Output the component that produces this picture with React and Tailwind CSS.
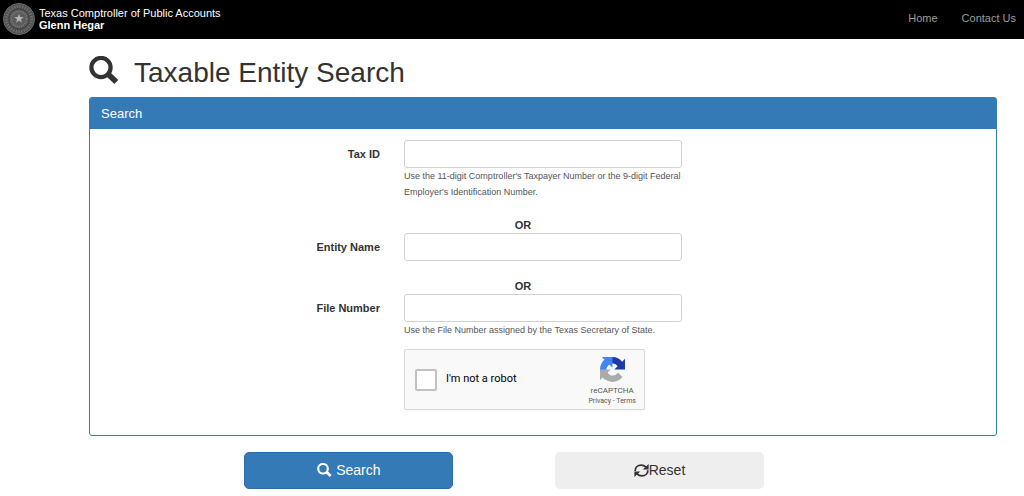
function SearchIcon({ className }) {
  return (
    <svg viewBox="0 0 30 30" className={className} fill="none" stroke="currentColor" aria-hidden="true">
      <circle cx="12" cy="11.5" r="9.6" strokeWidth="4.2" />
      <path d="M18.5 17.5 L27.3 26" strokeWidth="5.6" />
    </svg>
  );
}

function RefreshIcon({ className }) {
  return (
    <svg viewBox="0 0 16 16" className={className} fill="none" stroke="currentColor" aria-hidden="true">
      <path d="M1.2 8.4 C1.2 4.6 4.2 2.2 7.6 2.2 C9.6 2.2 11.4 3 12.8 4.4" strokeWidth="1.9" />
      <path d="M14.8 7.6 C14.8 11.4 11.8 13.8 8.4 13.8 C6.4 13.8 4.6 13 3.2 11.6" strokeWidth="1.9" />
      <path d="M15.6 1 V7 H9.4 Z" fill="currentColor" stroke="none" />
      <path d="M0.4 15 V9 H6.6 Z" fill="currentColor" stroke="none" />
    </svg>
  );
}

function Seal() {
  const star = 'M16 8.5 L17.8 13.6 L23.2 13.7 L18.9 17 L20.5 22.2 L16 19.1 L11.5 22.2 L13.1 17 L8.8 13.7 L14.2 13.6 Z';
  return (
    <svg viewBox="0 0 32 32" className="size-8 shrink-0" role="img" aria-label="Comptroller seal">
      <circle cx="16" cy="16" r="15.5" fill="#4c4c4c" stroke="#6c6c6c" />
      <circle cx="16" cy="16" r="12.6" fill="none" stroke="#707070" strokeWidth="3" strokeDasharray="1.4 1.3" />
      <circle cx="16" cy="16" r="10" fill="#5c5c5c" stroke="#3c3c3c" strokeWidth="0.8" />
      <circle cx="16" cy="16" r="7.6" fill="none" stroke="#7c7c7c" strokeWidth="1.6" strokeDasharray="1 1.2" />
      <path d={star} fill="#b5b5b5" transform="translate(5.6 5.2) scale(0.65)" />
    </svg>
  );
}

function RecaptchaLogo() {
  return (
    <svg viewBox="0 0 64 64" className="size-[25px]" aria-hidden="true">
      <path
        fill="#1c3aa9"
        d="M64 31.955l-.033-1.37V4.687l-7.16 7.16C50.948 4.674 42.033.093 32.05.093c-10.4 0-19.622 4.96-25.458 12.64l11.736 11.86a15.55 15.55 0 0 1 4.754-5.334c2.05-1.6 4.952-2.906 8.968-2.906.485 0 .86.057 1.135.163 4.976.393 9.288 3.14 11.828 7.124l-8.307 8.307L64 31.953"
      />
      <path
        fill="#4285f4"
        d="M31.862.094l-1.37.033H4.594l7.16 7.16C4.58 13.147 0 22.06 0 32.046c0 10.4 4.96 19.622 12.64 25.458L24.5 45.768a15.55 15.55 0 0 1-5.334-4.754c-1.6-2.05-2.906-4.952-2.906-8.968 0-.485.057-.86.163-1.135.393-4.976 3.14-9.288 7.124-11.828l8.307 8.307L31.86.095"
      />
      <path
        fill="#ababab"
        d="M.001 32.045l.033 1.37v25.898l7.16-7.16c5.86 7.173 14.774 11.754 24.76 11.754 10.4 0 19.622-4.96 25.458-12.64l-11.736-11.86a15.55 15.55 0 0 1-4.754 5.334c-2.05 1.6-4.952 2.906-8.968 2.906-.485 0-.86-.057-1.135-.163-4.976-.393-9.288-3.14-11.828-7.124l8.307-8.307L0 32.045"
      />
    </svg>
  );
}

function Field({ id, label, help }) {
  return (
    <div className="grid grid-cols-[290fr_278fr_290fr] gap-x-6">
      <label htmlFor={id} className="h-7 text-right text-[11px] leading-7 font-bold">
        {label}
      </label>
      <div>
        <input
          id={id}
          type="text"
          className="block h-7 w-full rounded-[3px] border border-[#d2d2d2] bg-white px-2 text-[11px]"
        />
        {help && <p className="text-[9px] leading-4 text-[#555]">{help}</p>}
      </div>
    </div>
  );
}

function OrRow() {
  return (
    <div className="mt-[17px] grid grid-cols-[290fr_278fr_290fr] gap-x-6 text-[11px] leading-4 font-bold">
      <div className="col-start-2 pr-10 text-center">OR</div>
    </div>
  );
}

function Recaptcha() {
  return (
    <div className="mt-[11px] grid grid-cols-[290fr_278fr_290fr] gap-x-6">
      <div className="col-start-2 flex h-[61px] w-[241px] items-center rounded-xs border border-[#d8d8d8] bg-[#f9f9f9] pr-2 pl-[10px] font-[Roboto,sans-serif] shadow-xs">
        <input
          id="robot"
          type="checkbox"
          className="size-[22px] shrink-0 appearance-none rounded-xs border-2 border-[#c1c1c1] bg-white"
        />
        <label htmlFor="robot" className="ml-[9px] flex-1 text-[11px] text-black">
          I'm not a robot
        </label>
        <div className="flex flex-col items-center pt-1 text-[#555]">
          <RecaptchaLogo />
          <span className="mt-1 text-[8px] leading-[10px]">reCAPTCHA</span>
          <span className="text-[7px] leading-[10px]">
            <a href="#privacy">Privacy</a> - <a href="#terms">Terms</a>
          </span>
        </div>
      </div>
    </div>
  );
}

export default function App() {
  return (
    <div className="bg-white font-['Liberation_Sans',Arial,sans-serif] text-[#333]">
      <header className="flex h-[39px] items-center bg-black pr-2 pb-0.5 pl-[3px] text-[11px]">
        <Seal />
        <div className="ml-1 flex-1 leading-3 text-white">
          <div>Texas Comptroller of Public Accounts</div>
          <div className="font-bold">Glenn Hegar</div>
        </div>
        <nav className="flex gap-6 text-[#9d9d9d]">
          <a href="#home">Home</a>
          <a href="#contact">Contact Us</a>
        </nav>
      </header>

      <main className="pr-[27px] pl-[89px]">
        <h1 className="flex items-start pt-[17px] pb-[7px] text-[28px] leading-[34px]">
          <SearchIcon className="mr-[15px] size-[30px]" />
          Taxable Entity Search
        </h1>

        <form>
          <section className="rounded-[3px] border border-[#337ab7]">
            <h2 className="bg-[#337ab7] px-[11px] py-1.5 text-[13px] leading-[19px] text-white">Search</h2>
            <div className="pt-[11px] pb-[25px]">
              <Field
                id="tax-id"
                label="Tax ID"
                help="Use the 11-digit Comptroller's Taxpayer Number or the 9-digit Federal Employer's Identification Number."
              />
              <OrRow />
              <Field id="entity-name" label="Entity Name" />
              <OrRow />
              <Field id="file-number" label="File Number" help="Use the File Number assigned by the Texas Secretary of State." />
              <Recaptcha />
            </div>
          </section>

          <div className="mt-4 grid grid-cols-12 gap-x-6 text-[14px]">
            <button
              type="submit"
              className="col-span-3 col-start-3 flex h-[37px] items-center justify-center gap-1 rounded-[5px] border border-[#2e6da4] bg-[#337ab7] text-white"
            >
              <SearchIcon className="size-[15px]" />
              Search
            </button>
            <button
              type="reset"
              className="col-span-3 col-start-7 flex h-[37px] items-center justify-center rounded-[5px] bg-[#eee]"
            >
              <RefreshIcon className="size-[15px]" />
              Reset
            </button>
          </div>
        </form>
      </main>
    </div>
  );
}
